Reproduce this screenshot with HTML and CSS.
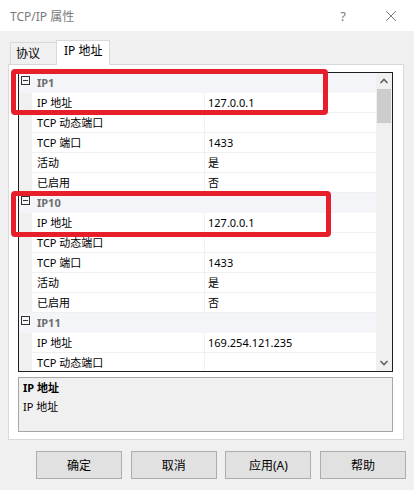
FILE: index.html
```html
<!DOCTYPE html>
<html lang="zh-CN">
<head>
<meta charset="utf-8">
<title>TCP/IP 属性</title>
<link rel="stylesheet" href="styles.css">
</head>
<body>
<div class="titlebar">
  <span class="title">TCP/IP 属性</span>
  <span class="help">?</span>
  <span class="close"><svg width="12" height="12" viewBox="0 0 12 12"><path d="M1 1 L11 11 M11 1 L1 11" stroke="#7a7a7a" stroke-width="1" fill="none"/></svg></span>
</div>
<div class="tabs">
  <div class="tab">协议</div>
  <div class="tab active">IP 地址</div>
</div>
<div class="panel">
  <div class="grid">
    <div class="rows">
      <div class="row cat"><span class="mcell"><svg class="minus" width="9" height="9" viewBox="0 0 9 9"><rect x="0.5" y="0.5" width="8" height="8" fill="none" stroke="#333"/><path d="M2 4.5 H7" stroke="#333"/></svg></span><span class="cname">IP1</span></div>
      <div class="row"><span class="mcell"></span><span class="name">IP 地址</span><span class="val">127.0.0.1</span></div>
      <div class="row"><span class="mcell"></span><span class="name">TCP 动态端口</span><span class="val"></span></div>
      <div class="row"><span class="mcell"></span><span class="name">TCP 端口</span><span class="val">1433</span></div>
      <div class="row"><span class="mcell"></span><span class="name">活动</span><span class="val">是</span></div>
      <div class="row"><span class="mcell"></span><span class="name">已启用</span><span class="val">否</span></div>
      <div class="row cat"><span class="mcell"><svg class="minus" width="9" height="9" viewBox="0 0 9 9"><rect x="0.5" y="0.5" width="8" height="8" fill="none" stroke="#333"/><path d="M2 4.5 H7" stroke="#333"/></svg></span><span class="cname">IP10</span></div>
      <div class="row"><span class="mcell"></span><span class="name">IP 地址</span><span class="val">127.0.0.1</span></div>
      <div class="row"><span class="mcell"></span><span class="name">TCP 动态端口</span><span class="val"></span></div>
      <div class="row"><span class="mcell"></span><span class="name">TCP 端口</span><span class="val">1433</span></div>
      <div class="row"><span class="mcell"></span><span class="name">活动</span><span class="val">是</span></div>
      <div class="row"><span class="mcell"></span><span class="name">已启用</span><span class="val">否</span></div>
      <div class="row cat"><span class="mcell"><svg class="minus" width="9" height="9" viewBox="0 0 9 9"><rect x="0.5" y="0.5" width="8" height="8" fill="none" stroke="#333"/><path d="M2 4.5 H7" stroke="#333"/></svg></span><span class="cname">IP11</span></div>
      <div class="row"><span class="mcell"></span><span class="name">IP 地址</span><span class="val">169.254.121.235</span></div>
      <div class="row"><span class="mcell"></span><span class="name">TCP 动态端口</span><span class="val"></span></div>
    </div>
    <div class="vscroll">
      <div class="arrow"><svg width="16" height="16" viewBox="0 0 16 16"><path d="M4.5 10 L8 6.5 L11.5 10" stroke="#606060" stroke-width="1.6" fill="none"/></svg></div>
      <div class="thumb"></div>
      <div class="track"></div>
      <div class="arrow"><svg width="16" height="16" viewBox="0 0 16 16"><path d="M4.5 6 L8 9.5 L11.5 6" stroke="#606060" stroke-width="1.6" fill="none"/></svg></div>
    </div>
  </div>
  <div class="desc">
    <div class="desc-title">IP 地址</div>
    <div class="desc-text">IP 地址</div>
  </div>
</div>
<div class="buttons">
  <button class="btn">确定</button>
  <button class="btn">取消</button>
  <button class="btn">应用(A)</button>
  <button class="btn">帮助</button>
</div>
<div class="mark mark1"></div>
<div class="mark mark2"></div>
</body>
</html>
```
FILE: styles.css
```css
html, body {
  margin: 0;
  padding: 0;
}
body {
  width: 414px;
  height: 490px;
  background: #f0f0f0;
  font-family: "Noto Sans", "Noto Sans CJK SC", sans-serif;
  font-size: 12px;
  color: #000;
  position: relative;
  overflow: hidden;
}
.titlebar {
  height: 31px;
  background: #fff;
  display: flex;
  align-items: center;
  padding-left: 10px;
  color: #7a7a7a;
}
.title {
  flex: 1;
  font-size: 12px;
}
.help {
  width: 46px;
  text-align: center;
  font-size: 13px;
  margin-right: 2px;
}
.close {
  width: 46px;
  display: flex;
  justify-content: center;
  align-items: center;
}
.tabs {
  display: flex;
  align-items: flex-end;
  height: 24px;
  margin-top: 9px;
  padding-left: 10px;
  position: relative;
  z-index: 2;
}
.tab {
  box-sizing: border-box;
  height: 22px;
  width: 46px;
  border: 1px solid #d9d9d9;
  border-right: none;
  border-bottom: none;
  background: #f0f0f0;
  padding-left: 5px;
  line-height: 21px;
}
.tab.active {
  height: 25px;
  width: 54px;
  margin-bottom: -1px;
  background: #fff;
  border-right: 1px solid #d9d9d9;
  padding-left: 7px;
  line-height: 19px;
}
.panel {
  box-sizing: border-box;
  margin-left: 8px;
  width: 396px;
  height: 376px;
  border: 1px solid #d9d9d9;
  background: #fff;
  padding: 7px 0 0 9px;
  position: relative;
  z-index: 1;
}
.grid {
  box-sizing: border-box;
  width: 375px;
  height: 300px;
  border: 1px solid #1e1e1e;
  display: flex;
  overflow: hidden;
}
.rows {
  flex: 1;
  overflow: hidden;
  font-size: 11px;
}
.row {
  display: grid;
  grid-template-columns: 13px 173px 1fr;
  height: 20px;
}
.row > span {
  box-sizing: border-box;
  height: 20px;
  line-height: 19px;
  white-space: nowrap;
}
.mcell {
  background: #f0f0f0;
}
.name {
  border-bottom: 1px solid #f0f0f0;
  border-right: 1px solid #f0f0f0;
  padding-left: 5px;
}
.val {
  border-bottom: 1px solid #f0f0f0;
  padding-left: 3px;
}
.row.cat {
  background: #f3f5f9;
}
.row.cat .mcell {
  background: #f3f5f9;
  padding: 3px 0 0 2px;
}
.minus {
  display: block;
}
.cname {
  grid-column: 2 / 4;
  padding-left: 5px;
  font-weight: bold;
  color: #6d6d6d;
}
.vscroll {
  width: 16px;
  background: #f0f0f0;
  display: flex;
  flex-direction: column;
}
.arrow {
  height: 16px;
  display: flex;
  justify-content: center;
}
.thumb {
  height: 34px;
  margin: 0 1px;
  background: #cdcdcd;
}
.track {
  flex: 1;
}
.desc {
  box-sizing: border-box;
  width: 375px;
  height: 55px;
  margin-top: 5px;
  border: 1px solid #a6a6a6;
  background: #f0f0f0;
  padding: 0 4px;
  font-size: 11px;
  line-height: 19px;
}
.desc-title {
  font-weight: bold;
}
.buttons {
  display: flex;
  gap: 8.67px;
  padding-left: 36px;
  margin-top: 11px;
}
.btn {
  box-sizing: border-box;
  width: 86px;
  height: 28px;
  border: 1px solid #adadad;
  background: #e1e1e1;
  font-family: "Noto Sans", "Noto Sans CJK SC", sans-serif;
  font-size: 12px;
  color: #000;
  padding: 0;
  border-radius: 0;
}
.mark {
  position: absolute;
  box-sizing: border-box;
  border: 5px solid #e61f2a;
  border-radius: 4px;
  z-index: 5;
}
.mark1 {
  left: 11px;
  top: 69px;
  width: 317px;
  height: 46px;
}
.mark2 {
  left: 11px;
  top: 191px;
  width: 320px;
  height: 46px;
}
```
